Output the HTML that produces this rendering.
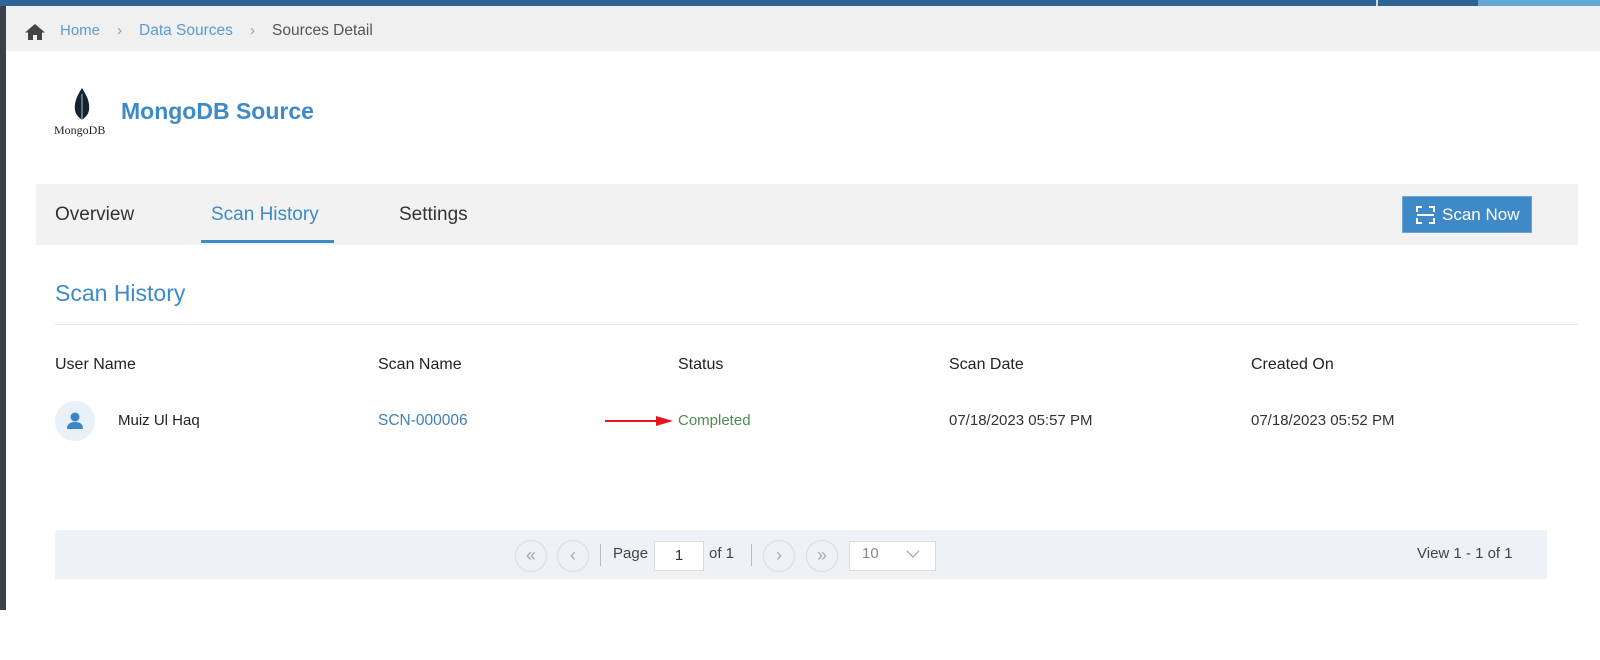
<!DOCTYPE html>
<html><head><style>
*{margin:0;padding:0;box-sizing:border-box}
body{width:1600px;height:660px;background:#fff;font-family:"Liberation Sans",sans-serif;position:relative;overflow:hidden;color:#222}
.a{position:absolute;white-space:nowrap}
</style></head><body>
<div class="a" style="left:0;top:0;width:1600px;height:6px;background:#2d6497"></div>
<div class="a" style="left:1376px;top:0;width:2px;height:6px;background:#cfd8e0"></div>
<div class="a" style="left:1478px;top:0;width:122px;height:6px;background:#63a7d3"></div>
<div class="a" style="left:0;top:6px;width:6px;height:604px;background:#3a4148"></div>
<div class="a" style="left:6px;top:6px;width:1594px;height:45px;background:#f0f0f0"></div>
<svg class="a" style="left:25px;top:23px" width="20" height="17" viewBox="0 0 20 17"><path d="M10 1L0 9.5h3V17h5v-5h4v5h5V9.5h3z" fill="#444"/></svg>
<div class="a" style="left:60px;top:22px;font-size:15px;color:#5b9bd1">Home</div>
<div class="a" style="left:117px;top:22px;font-size:15px;color:#999">›</div>
<div class="a" style="left:139px;top:22px;font-size:15.5px;color:#5b9bd1">Data Sources</div>
<div class="a" style="left:250px;top:22px;font-size:15px;color:#999">›</div>
<div class="a" style="left:272px;top:22px;font-size:15.5px;color:#555">Sources Detail</div>
<svg class="a" style="left:73px;top:88px" width="18" height="38" viewBox="0 0 18 38"><path d="M9 0C4 8 1 14 2 22c1 6 5 8 7 10 2-2 6-4 7-10C17 14 14 8 9 0z" fill="#13232f"/><path d="M9 6v30" stroke="#fff" stroke-width=".7"/></svg>
<div class="a" style="left:54px;top:123px;font-size:12px;font-family:'Liberation Serif',serif;color:#222">MongoDB</div>
<div class="a" style="left:121px;top:98px;font-size:23px;font-weight:bold;color:#3d8ac9">MongoDB Source</div>
<div class="a" style="left:36px;top:184px;width:1542px;height:61px;background:#f2f2f2"></div>
<div class="a" style="left:55px;top:204px;font-size:19px;color:#333">Overview</div>
<div class="a" style="left:211px;top:204px;font-size:19px;color:#3d8ac9">Scan History</div>
<div class="a" style="left:201px;top:240px;width:133px;height:3px;background:#3d8ac9"></div>
<div class="a" style="left:399px;top:204px;font-size:19px;color:#333">Settings</div>
<div class="a" style="left:1402px;top:196px;width:130px;height:37px;background:#3f89c9;border:1px solid #6aa6d8"></div>
<svg class="a" style="left:1416px;top:206px" width="19" height="18" viewBox="0 0 19 18" fill="none" stroke="#fff" stroke-width="2"><path d="M1 6V1h5M13 1h5v5M18 12v5h-5M6 17H1v-5M1 9h17"/></svg>
<div class="a" style="left:1442px;top:205px;font-size:17px;color:#fff">Scan Now</div>
<div class="a" style="left:55px;top:280px;font-size:23px;color:#3d8ac9">Scan History</div>
<div class="a" style="left:55px;top:324px;width:1523px;height:1px;background:#e6e6e6"></div>
<div class="a" style="left:55px;top:356px;font-size:16px;color:#222">User Name</div>
<div class="a" style="left:378px;top:356px;font-size:16px;color:#222">Scan Name</div>
<div class="a" style="left:678px;top:356px;font-size:16px;color:#222">Status</div>
<div class="a" style="left:949px;top:356px;font-size:16px;color:#222">Scan Date</div>
<div class="a" style="left:1251px;top:356px;font-size:16px;color:#222">Created On</div>
<div class="a" style="left:55px;top:401px;width:40px;height:40px;border-radius:50%;background:#e8f0f8"></div>
<svg class="a" style="left:65px;top:411px" width="20" height="20" viewBox="0 0 20 20"><circle cx="10" cy="6" r="4.5" fill="#3d86c6"/><path d="M2 18c0-5 3-7 8-7s8 2 8 7z" fill="#3d86c6"/></svg>
<div class="a" style="left:118px;top:412px;font-size:15px;color:#222">Muiz Ul Haq</div>
<div class="a" style="left:378px;top:412px;font-size:15.5px;color:#3d80b8">SCN-000006</div>
<svg class="a" style="left:604px;top:414px" width="70" height="14"><path d="M1 7h55" stroke="#e8141a" stroke-width="2"/><path d="M52 2l17 5-17 5z" fill="#e8141a"/></svg>
<div class="a" style="left:678px;top:412px;font-size:15px;color:#4f8a4f">Completed</div>
<div class="a" style="left:949px;top:412px;font-size:15px;color:#333">07/18/2023 05:57 PM</div>
<div class="a" style="left:1251px;top:412px;font-size:15px;color:#333">07/18/2023 05:52 PM</div>
<div class="a" style="left:55px;top:530px;width:1492px;height:49px;background:#eef1f5"></div>
<div class="a" style="left:515px;top:540px;width:32px;height:32px;border-radius:50%;border:1px solid #ddd;color:#aaa;font-size:18px;text-align:center;line-height:29px">«</div>
<div class="a" style="left:557px;top:540px;width:32px;height:32px;border-radius:50%;border:1px solid #ddd;color:#aaa;font-size:18px;text-align:center;line-height:29px">‹</div>
<div class="a" style="left:600px;top:544px;width:1px;height:22px;background:#bbb"></div>
<div class="a" style="left:613px;top:545px;font-size:15px;color:#444">Page</div>
<div class="a" style="left:654px;top:541px;width:50px;height:30px;background:#fff;border:1px solid #ddd;font-size:15px;text-align:center;line-height:28px;color:#333">1</div>
<div class="a" style="left:709px;top:545px;font-size:15px;color:#444">of 1</div>
<div class="a" style="left:751px;top:544px;width:1px;height:22px;background:#bbb"></div>
<div class="a" style="left:763px;top:540px;width:32px;height:32px;border-radius:50%;border:1px solid #ddd;color:#aaa;font-size:18px;text-align:center;line-height:29px">›</div>
<div class="a" style="left:806px;top:540px;width:32px;height:32px;border-radius:50%;border:1px solid #ddd;color:#aaa;font-size:18px;text-align:center;line-height:29px">»</div>
<div class="a" style="left:849px;top:541px;width:87px;height:30px;background:#fff;border:1px solid #ddd"></div>
<div class="a" style="left:862px;top:545px;font-size:15px;color:#888">10</div>
<svg class="a" style="left:906px;top:550px" width="14" height="9"><path d="M1 1l6 6 6-6" stroke="#999" fill="none"/></svg>
<div class="a" style="left:1417px;top:545px;font-size:15px;color:#444">View 1 - 1 of 1</div>
</body></html>
